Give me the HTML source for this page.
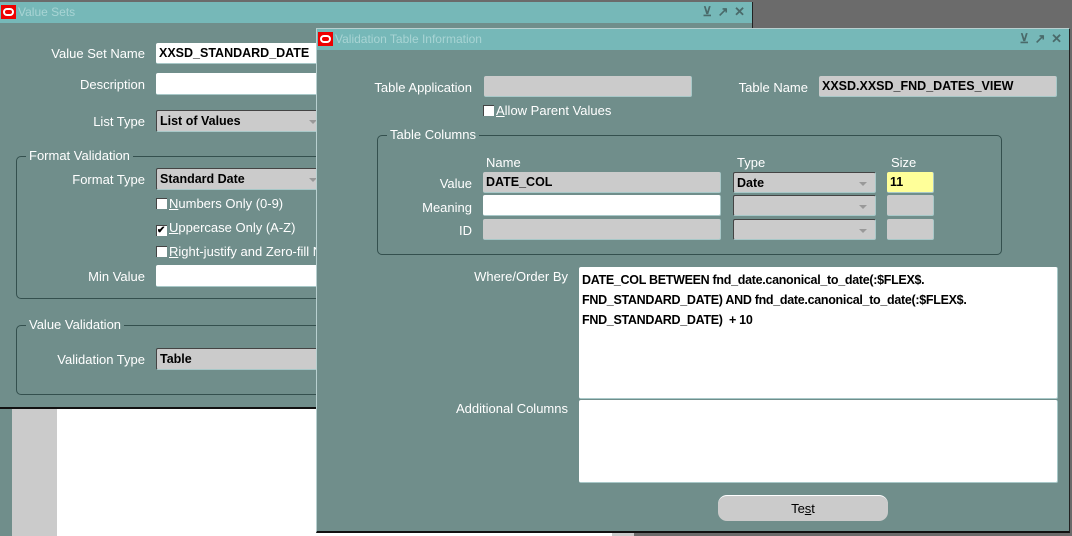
<!DOCTYPE html>
<html><head><meta charset="utf-8"><style>
*{box-sizing:border-box;margin:0;padding:0}
body{width:1072px;height:536px;position:relative;overflow:hidden;background:#6b6b6b;font-family:"Liberation Sans",sans-serif;font-size:13px;color:#fff}
.a{position:absolute}
.tb{background:#76b8b8;color:#a8d4d4;font-size:12px;line-height:20px;padding-left:18px}
.logo{position:absolute;left:1px;top:3px;width:15px;height:14px;background:#e00;}
.logo:after{content:"";position:absolute;left:2px;top:3px;width:11px;height:8px;border:2px solid #fff;border-radius:5px;box-sizing:border-box}
.ctl{position:absolute;right:6px;top:0;color:#4a6a6a;font-size:13px;font-weight:bold;letter-spacing:1px}
.win{background:#708e8b}
.lbl{position:absolute;text-align:right;color:#fff;font-size:13px;white-space:nowrap}
.f{position:absolute;background:#fff;border-radius:2px;border-bottom:1px solid #a8c8c8;border-right:1px solid #a8c8c8;color:#000;font-weight:bold;font-size:12.5px;padding-left:3px;line-height:20px;white-space:nowrap;overflow:hidden}
.g{background:#cbcbcb}
.dd:after{content:"";position:absolute;right:8px;top:9px;border:4px solid transparent;border-top:4px solid #999}
.dd{border-top:1px solid #444;border-left:1px solid #444}
.grp{position:absolute;border:1px solid #34504e;border-radius:5px}
.leg{position:absolute;background:#708e8b;padding:0 3px;top:-8px;left:9px;font-size:13px;line-height:14px}
.cb{position:absolute;font-size:13px;white-space:nowrap}
.cb i{display:inline-block;width:11px;height:11px;background:#fff;border-top:1px solid #444;border-left:1px solid #444;vertical-align:-1px;margin-right:2px;color:#000;font-style:normal;font-size:10px;line-height:9px;font-weight:bold}
</style></head><body>
<div class="a" style="left:0;top:408px;width:12px;height:128px;background:#708e8b"></div>
<div class="a" style="left:12px;top:408px;width:45px;height:128px;background:#cbcbcb"></div>
<div class="a" style="left:57px;top:408px;width:555px;height:128px;background:#fff"></div>
<div class="a" style="left:612px;top:408px;width:22px;height:128px;background:#cbcbcb"></div>

<div class="a win" style="left:0;top:2px;width:753px;height:407px;border-right:1px solid #222;border-bottom:2px solid #111">
 <div class="tb" style="height:21px;position:relative"><div class="logo"></div>Value Sets<span class="ctl">⊻ ↗ ✕</span></div>
</div>
<div class="lbl" style="left:0;width:145px;top:46px">Value Set Name</div>
<div class="f" style="left:156px;top:43px;width:170px;height:21px">XXSD_STANDARD_DATE</div>
<div class="lbl" style="left:0;width:145px;top:77px">Description</div>
<div class="f" style="left:156px;top:73px;width:170px;height:22px"></div>
<div class="lbl" style="left:0;width:145px;top:114px">List Type</div>
<div class="f g dd" style="left:156px;top:110px;width:170px;height:22px">List of Values</div>
<div class="grp" style="left:16px;top:156px;width:330px;height:143px"><div class="leg">Format Validation</div></div>
<div class="lbl" style="left:0;width:145px;top:172px">Format Type</div>
<div class="f g dd" style="left:156px;top:168px;width:170px;height:22px">Standard Date</div>
<div class="cb" style="left:156px;top:196px"><i></i><u>N</u>umbers Only (0-9)</div>
<div class="cb" style="left:156px;top:220px"><i>✔</i><u>U</u>ppercase Only (A-Z)</div>
<div class="cb" style="left:156px;top:244px"><i></i><u>R</u>ight-justify and Zero-fill N</div>
<div class="lbl" style="left:0;width:145px;top:269px">Min Value</div>
<div class="f" style="left:156px;top:265px;width:170px;height:22px"></div>
<div class="grp" style="left:16px;top:325px;width:330px;height:70px"><div class="leg">Value Validation</div></div>
<div class="lbl" style="left:0;width:145px;top:352px">Validation Type</div>
<div class="f g" style="left:156px;top:348px;width:170px;height:22px;border-top:1px solid #444;border-left:1px solid #444">Table</div>

<div class="a win" style="left:316px;top:28px;width:754px;height:505px;border-left:1px solid #b8d0d0;border-top:1px solid #b8d0d0;border-right:1px solid #222;border-bottom:2px solid #111">
 <div class="tb" style="height:21px;position:relative"><div class="logo"></div>Validation Table Information<span class="ctl">⊻ ↗ ✕</span></div>
</div>
<div class="lbl" style="left:300px;width:172px;top:80px">Table Application</div>
<div class="f g" style="left:484px;top:76px;width:208px;height:21px"></div>
<div class="cb" style="left:483px;top:103px"><i></i><u>A</u>llow Parent Values</div>
<div class="lbl" style="left:700px;width:108px;top:80px">Table Name</div>
<div class="f g" style="left:819px;top:76px;width:238px;height:21px">XXSD.XXSD_FND_DATES_VIEW</div>
<div class="grp" style="left:377px;top:135px;width:625px;height:120px"><div class="leg">Table Columns</div></div>
<div class="lbl" style="left:486px;top:155px">Name</div>
<div class="lbl" style="left:737px;top:155px">Type</div>
<div class="lbl" style="left:891px;top:155px">Size</div>
<div class="lbl" style="left:380px;width:92px;top:176px">Value</div>
<div class="lbl" style="left:380px;width:92px;top:200px">Meaning</div>
<div class="lbl" style="left:380px;width:92px;top:223px">ID</div>
<div class="f g" style="left:483px;top:172px;width:238px;height:21px">DATE_COL</div>
<div class="f" style="left:483px;top:195px;width:238px;height:21px"></div>
<div class="f g" style="left:483px;top:219px;width:238px;height:21px"></div>
<div class="f g dd" style="left:733px;top:172px;width:143px;height:21px">Date</div>
<div class="f g dd" style="left:733px;top:195px;width:143px;height:21px"></div>
<div class="f g dd" style="left:733px;top:219px;width:143px;height:21px"></div>
<div class="f" style="left:887px;top:172px;width:47px;height:21px;background:#ffff99">11</div>
<div class="f g" style="left:887px;top:195px;width:47px;height:21px"></div>
<div class="f g" style="left:887px;top:219px;width:47px;height:21px"></div>
<div class="lbl" style="left:440px;width:128px;top:269px">Where/Order By</div>
<div class="f" style="left:579px;top:267px;width:479px;height:132px;white-space:normal;line-height:20px;padding-top:3px;letter-spacing:-0.3px">DATE_COL BETWEEN fnd_date.canonical_to_date(:$FLEX$.<br>FND_STANDARD_DATE) AND fnd_date.canonical_to_date(:$FLEX$.<br>FND_STANDARD_DATE)&nbsp; + 10</div>
<div class="lbl" style="left:440px;width:128px;top:401px">Additional Columns</div>
<div class="f" style="left:579px;top:400px;width:479px;height:83px"></div>
<div class="a" style="left:718px;top:495px;width:170px;height:26px;background:#cbcbcb;border-radius:9px;border-top:1px solid #fff;color:#000;text-align:center;line-height:25px;font-size:13px">Te<u>s</u>t</div>
</body></html>
